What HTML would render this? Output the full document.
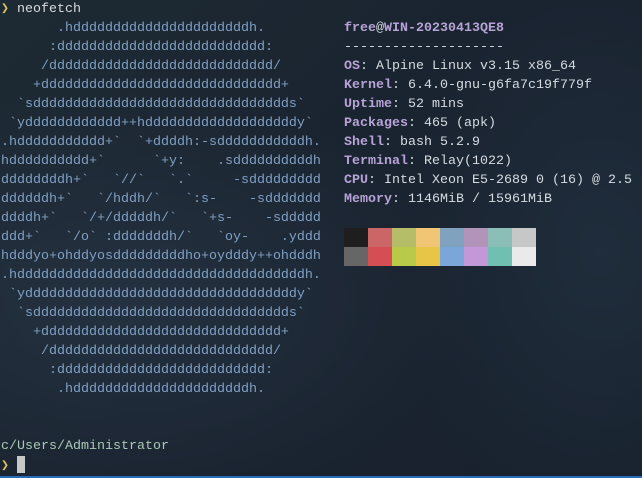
<!DOCTYPE html>
<html><head><meta charset="utf-8"><style>
html,body{margin:0;padding:0;}
body{width:642px;height:478px;overflow:hidden;position:relative;
background:radial-gradient(ellipse 500px 300px at 120px 300px,#243140 0%,rgba(36,49,64,0) 70%),
radial-gradient(ellipse 300px 400px at 600px 250px,#1f2d3c 0%,rgba(31,45,60,0) 70%),
linear-gradient(135deg,#1d2a33 0%,#1a2330 50%,#18212d 100%);
font-family:"Liberation Mono","DejaVu Sans Mono",monospace;font-size:13.33px;}
pre{margin:0;position:absolute;left:1px;top:0;line-height:19px;white-space:pre;font:inherit;line-height:19px;}
.a{color:#7fa0c4;}
.w{color:#d6dbe0;}
.l{color:#b6a3d6;font-weight:bold;}
.y{color:#d8c060;}
.g{color:#a9c9b6;}
.sw{position:absolute;width:24px;height:19px;}
.cur{display:inline-block;width:8px;height:17px;background:#c8c8c8;vertical-align:-4px;}
</style></head><body>
<pre><span class="y">❯</span><span class="w"> neofetch</span>
<span class="a">       .hddddddddddddddddddddddh.
      :dddddddddddddddddddddddddd:
     /dddddddddddddddddddddddddddd/
    +dddddddddddddddddddddddddddddd+
  `sdddddddddddddddddddddddddddddddds`
 `ydddddddddddd++hdddddddddddddddddddy`
.hddddddddddd+`  `+ddddh:-sdddddddddddh.
hdddddddddd+`      `+y:    .sddddddddddh
ddddddddh+`   `//`   `.`     -sddddddddd
ddddddh+`   `/hddh/`   `:s-    -sddddddd
ddddh+`   `/+/dddddh/`   `+s-    -sddddd
ddd+`   `/o` :dddddddh/`   `oy-    .yddd
hdddyo+ohddyosdddddddddho+oydddy++ohdddh
.hddddddddddddddddddddddddddddddddddddh.
 `yddddddddddddddddddddddddddddddddddy`
  `sdddddddddddddddddddddddddddddddds`
    +dddddddddddddddddddddddddddddd+
     /dddddddddddddddddddddddddddd/
      :dddddddddddddddddddddddddd:
       .hddddddddddddddddddddddh.</span>


<span class="g">c/Users/Administrator</span>
<span class="y">❯</span> <span class="cur"></span></pre>
<pre style="left:344px;top:19px"><span class="l">free</span><span class="w">@</span><span class="l">WIN-20230413QE8</span>
<span class="w">--------------------</span>
<span class="l">OS</span><span class="w">: Alpine Linux v3.15 x86_64</span>
<span class="l">Kernel</span><span class="w">: 6.4.0-gnu-g6fa7c19f779f</span>
<span class="l">Uptime</span><span class="w">: 52 mins</span>
<span class="l">Packages</span><span class="w">: 465 (apk)</span>
<span class="l">Shell</span><span class="w">: bash 5.2.9</span>
<span class="l">Terminal</span><span class="w">: Relay(1022)</span>
<span class="l">CPU</span><span class="w">: Intel Xeon E5-2689 0 (16) @ 2.5</span>
<span class="l">Memory</span><span class="w">: 1146MiB / 15961MiB</span></pre>
<div class="sw" style="top:228px;left:344px;background:#1e1e1e"></div>
<div class="sw" style="top:228px;left:368px;background:#cc6666"></div>
<div class="sw" style="top:228px;left:392px;background:#b5bd68"></div>
<div class="sw" style="top:228px;left:416px;background:#f0c674"></div>
<div class="sw" style="top:228px;left:440px;background:#81a2be"></div>
<div class="sw" style="top:228px;left:464px;background:#b294bb"></div>
<div class="sw" style="top:228px;left:488px;background:#8abeb7"></div>
<div class="sw" style="top:228px;left:512px;background:#c5c8c6"></div>
<div class="sw" style="top:247px;left:344px;background:#666666"></div>
<div class="sw" style="top:247px;left:368px;background:#d54e53"></div>
<div class="sw" style="top:247px;left:392px;background:#b9ca4a"></div>
<div class="sw" style="top:247px;left:416px;background:#e7c547"></div>
<div class="sw" style="top:247px;left:440px;background:#7aa6da"></div>
<div class="sw" style="top:247px;left:464px;background:#c397d8"></div>
<div class="sw" style="top:247px;left:488px;background:#70c0b1"></div>
<div class="sw" style="top:247px;left:512px;background:#eaeaea"></div>
<div style="position:absolute;left:0;top:476px;width:642px;height:2px;background:#2a6bb8"></div>
</body></html>
